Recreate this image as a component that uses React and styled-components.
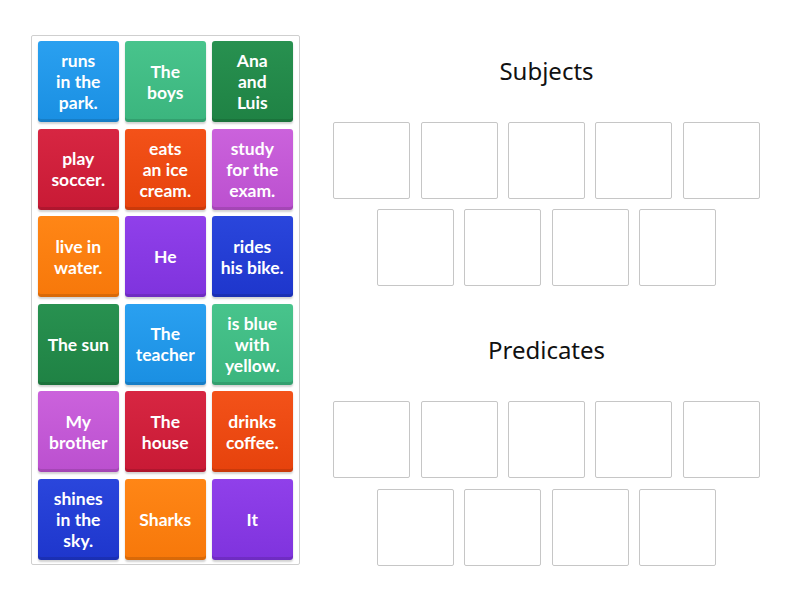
import React from "react";
import styled, { createGlobalStyle } from "styled-components";

const Global = createGlobalStyle`
  html, body { margin: 0; padding: 0; background: #fff; }
  body { font-family: "Noto Sans", "Open Sans", sans-serif; }
`;

const COLORS = {
  blue: ["#2aa0f0", "#1a8fe2"],
  teal: ["#48c48c", "#3bb57e"],
  green: ["#289150", "#1f8244"],
  red: ["#d72642", "#c81a35"],
  tomato: ["#f35219", "#e6420c"],
  violet: ["#cb62dc", "#bb50cf"],
  orange: ["#ff8616", "#f7780a"],
  purple: ["#9040ea", "#7f33dd"],
  indigo: ["#2a46dc", "#1e36cc"],
};

const items = [
  [["runs", "in the", "park."], "blue"],
  [["The", "boys"], "teal"],
  [["Ana", "and", "Luis"], "green"],
  [["play", "soccer."], "red"],
  [["eats", "an ice", "cream."], "tomato"],
  [["study", "for the", "exam."], "violet"],
  [["live in", "water."], "orange"],
  [["He"], "purple"],
  [["rides", "his bike."], "indigo"],
  [["The sun"], "green"],
  [["The", "teacher"], "blue"],
  [["is blue", "with", "yellow."], "teal"],
  [["My", "brother"], "violet"],
  [["The", "house"], "red"],
  [["drinks", "coffee."], "tomato"],
  [["shines", "in the", "sky."], "indigo"],
  [["Sharks"], "orange"],
  [["It"], "purple"],
];

const Page = styled.div`
  display: flex;
  align-items: flex-start;
  padding: 35px 0 0 31px;
`;

const Bank = styled.div`
  border: 1px solid #cfcfcf;
  border-radius: 2px;
  padding: 5px 6px 4px 6px;
  display: grid;
  grid-template-columns: repeat(3, 80.5px);
  grid-auto-rows: 81px;
  gap: 6.5px;
`;

const Tile = styled.div`
  display: flex;
  flex-direction: column;
  align-items: center;
  justify-content: center;
  text-align: center;
  color: #fff;
  font-family: Lato, "Noto Sans", sans-serif;
  font-size: 17.5px;
  font-weight: 700;
  line-height: 21px;
  border-radius: 3px;
  background: linear-gradient(${(p) => p.$c[0]}, ${(p) => p.$c[1]});
  box-shadow: inset 0 -3px 0 rgba(0, 0, 0, 0.12), 0 2px 2px rgba(0, 0, 0, 0.18);
`;

const Line = styled.span`
  display: block;
  height: 21px;
  white-space: nowrap;
`;

const Right = styled.div`
  width: 456px;
  margin-left: 19px;
  display: flex;
  flex-direction: column;
`;

const Section = styled.div`
  display: flex;
  flex-direction: column;
  align-items: center;
  margin-top: ${(p) => p.$top}px;
`;

const Title = styled.div`
  font-size: 24px;
  font-weight: 400;
  color: #111;
  line-height: 30px;
  height: 30px;
`;

const Slots = styled.div`
  margin-top: 36px;
  display: flex;
  flex-wrap: wrap;
  justify-content: center;
  gap: 10.3px 10.3px;
  width: 440px;
`;

const Slot = styled.div`
  width: 77px;
  height: 77px;
  box-sizing: border-box;
  border: 1px solid #c6c6c6;
  border-radius: 2px;
  background: #fff;
`;

function Group({ title, top }) {
  return (
    <Section $top={top}>
      <Title>{title}</Title>
      <Slots>
        {Array.from({ length: 9 }).map((_, i) => (
          <Slot key={i} />
        ))}
      </Slots>
    </Section>
  );
}

export default function App() {
  return (
    <>
      <Global />
      <Page>
        <Bank>
          {items.map(([lines, c], i) => (
            <Tile key={i} $c={COLORS[c]}>
              {lines.map((l, j) => (
                <Line key={j}>{l}</Line>
              ))}
            </Tile>
          ))}
        </Bank>
        <Right>
          <Group title="Subjects" top={21} />
          <Group title="Predicates" top={49} />
        </Right>
      </Page>
    </>
  );
}
